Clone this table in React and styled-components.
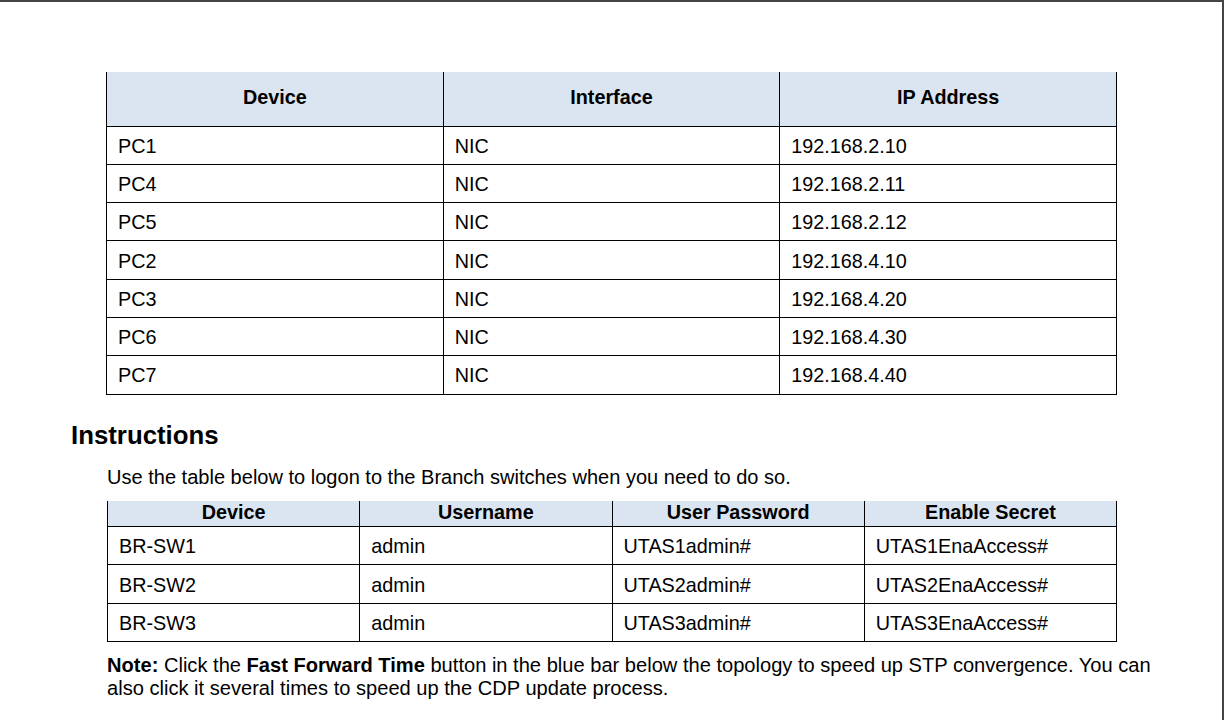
import React from 'react';
import styled, { createGlobalStyle } from 'styled-components';

const GlobalStyle = createGlobalStyle`
  html, body {
    margin: 0;
    padding: 0;
    background: #fff;
  }
  body {
    font-family: "Liberation Sans", Arial, sans-serif;
    color: #000;
  }
`;

const addresses = [
  ['PC1', 'NIC', '192.168.2.10'],
  ['PC4', 'NIC', '192.168.2.11'],
  ['PC5', 'NIC', '192.168.2.12'],
  ['PC2', 'NIC', '192.168.4.10'],
  ['PC3', 'NIC', '192.168.4.20'],
  ['PC6', 'NIC', '192.168.4.30'],
  ['PC7', 'NIC', '192.168.4.40'],
];

const logins = [
  ['BR-SW1', 'admin', 'UTAS1admin#', 'UTAS1EnaAccess#'],
  ['BR-SW2', 'admin', 'UTAS2admin#', 'UTAS2EnaAccess#'],
  ['BR-SW3', 'admin', 'UTAS3admin#', 'UTAS3EnaAccess#'],
];

export default function App() {
  return (
    <>
      <GlobalStyle />
      <Page>
        <Table $left={106} $width={1011}>
          <thead>
            <tr>
              <HeadCell $height={54}>Device</HeadCell>
              <HeadCell $height={54}>Interface</HeadCell>
              <HeadCell $height={54}>IP Address</HeadCell>
            </tr>
          </thead>
          <tbody>
            {addresses.map((row) => (
              <tr key={row[0]}>
                {row.map((cell, i) => (
                  <Cell key={i}>{cell}</Cell>
                ))}
              </tr>
            ))}
          </tbody>
        </Table>

        <Heading>Instructions</Heading>
        <Para>Use the table below to logon to the Branch switches when you need to do so.</Para>

        <Table $left={107} $width={1010} $top={11.5}>
          <thead>
            <tr>
              <HeadCell $height={26}>Device</HeadCell>
              <HeadCell $height={26}>Username</HeadCell>
              <HeadCell $height={26}>User Password</HeadCell>
              <HeadCell $height={26}>Enable Secret</HeadCell>
            </tr>
          </thead>
          <tbody>
            {logins.map((row) => (
              <tr key={row[0]}>
                {row.map((cell, i) => (
                  <Cell key={i}>{cell}</Cell>
                ))}
              </tr>
            ))}
          </tbody>
        </Table>

        <Note>
          <b>Note:</b> Click the <b>Fast Forward Time</b> button in the blue bar below the topology to speed up STP convergence. You can
          <br />
          also click it several times to speed up the CDP update process.
        </Note>
      </Page>
    </>
  );
}

const Page = styled.div`
  box-sizing: border-box;
  width: 1224px;
  height: 720px;
  border-top: 2px solid #444;
  border-right: 2px solid #444;
  padding-top: 70px;
  overflow: hidden;
`;

const Table = styled.table`
  border-collapse: collapse;
  table-layout: fixed;
  margin-left: ${(p) => p.$left}px;
  margin-top: ${(p) => p.$top || 0}px;
  width: ${(p) => p.$width}px;
  font-size: 19.8px;

  tbody tr {
    height: 38.3px;
  }
`;

const HeadCell = styled.th`
  background: #dbe5f1;
  height: ${(p) => p.$height}px;
  padding: 0 4px 2px;
  font-weight: bold;
  text-align: center;
  vertical-align: middle;
  border-left: 1px solid #000;
  border-right: 1px solid #000;
  border-bottom: 1px solid #000;
  box-sizing: border-box;
  white-space: nowrap;
`;

const Cell = styled.td`
  border: 1px solid #000;
  padding: 2px 11px 0;
  text-align: left;
  vertical-align: middle;
  white-space: nowrap;
`;

const Heading = styled.h2`
  margin: 25.5px 0 0 71px;
  font-size: 25.8px;
  line-height: 30px;
  font-weight: bold;
`;

const Para = styled.p`
  margin: 15px 0 0 107px;
  font-size: 20.05px;
  line-height: 24px;
`;

const Note = styled.p`
  margin: 12px 0 0 107px;
  font-size: 20.1px;
  line-height: 23px;
  white-space: nowrap;
`;
